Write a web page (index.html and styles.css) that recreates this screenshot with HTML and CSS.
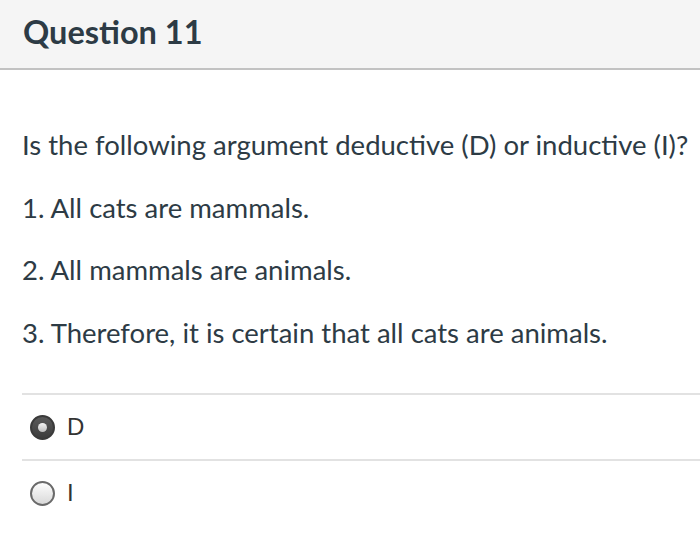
FILE: index.html
```html
<!DOCTYPE html>
<html>
<head>
<meta charset="utf-8">
<link rel="stylesheet" href="styles.css">
</head>
<body>
<div class="question">
  <div class="header"><h2 class="title">Question 11</h2></div>
  <div class="content">
    <p class="line">Is the following argument deductive (D) or inductive (I)?</p>
    <p class="line">1. All cats are mammals.</p>
    <p class="line">2. All mammals are animals.</p>
    <p class="line">3. Therefore, it is certain that all cats are animals.</p>
  </div>
  <div class="answers">
    <div class="answer"><span class="radio checked"></span><span class="label">D</span></div>
    <div class="answer"><span class="radio"></span><span class="label">I</span></div>
  </div>
</div>
</body>
</html>
```
FILE: styles.css
```css
html, body {
  margin: 0;
  padding: 0;
  background: #fff;
}
.question {
  width: 700px;
  height: 545px;
  overflow: hidden;
  font-family: Lato, "Liberation Sans", sans-serif;
  color: #2d3b45;
}
.header {
  height: 68px;
  background: #f5f5f5;
  border-bottom: 2px solid #c2c2c2;
  display: flex;
  align-items: center;
  padding-left: 23px;
  box-sizing: content-box;
}
.title {
  margin: 0;
  font-size: 32.5px;
  font-weight: 700;
  line-height: 1;
  padding-bottom: 4px;
}
.content {
  padding: 56px 0 0 22px;
}
.line {
  margin: 0 0 24px 0;
  font-size: 27.5px;
  line-height: 38.5px;
  white-space: nowrap;
}
.answers {
  margin-left: 22px;
  margin-top: 41px;
}
.answer {
  border-top: 2px solid #e2e2e2;
  height: 64px;
  display: flex;
  align-items: center;
  padding-left: 8px;
  padding-bottom: 4px;
  box-sizing: content-box;
  margin-bottom: -4px;
}
.radio {
  width: 21px;
  height: 21px;
  border-radius: 50%;
  border: 2px solid #6a6a6a;
  background: linear-gradient(#fdfdfd, #d9d9d9);
  display: flex;
  align-items: center;
  justify-content: center;
}
.radio.checked {
  border-color: #3a3a3a;
  background: linear-gradient(#5a5a5a, #3c3c3c);
}
.radio.checked::after {
  content: "";
  width: 9px;
  height: 9px;
  border-radius: 50%;
  background: linear-gradient(#f4f4f4, #bdbdbd);
}
.label {
  margin-left: 12px;
  font-family: "Liberation Sans", Arial, sans-serif;
  font-size: 24px;
  color: #333;
}
```
